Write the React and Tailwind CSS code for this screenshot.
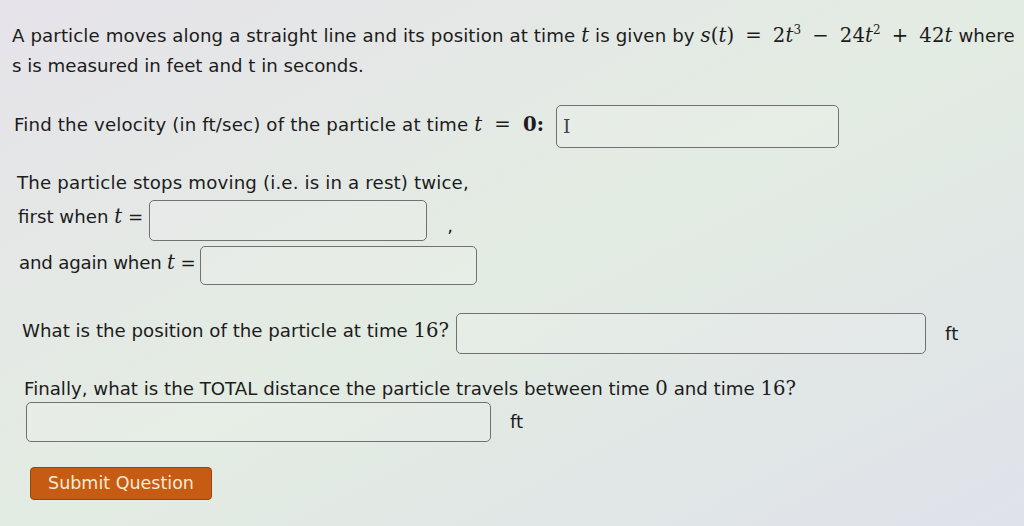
import React from "react";

// inline math pieces, rendered in a serif italic like the KaTeX output
const M = ({ children, className = "" }) => (
  <span className={`italic text-[1.08em] ${className}`} style={{ fontFamily: '"DejaVu Serif", "Liberation Serif", serif' }}>
    {children}
  </span>
);
const N = ({ children, className = "" }) => (
  <span className={`text-[1.08em] ${className}`} style={{ fontFamily: '"DejaVu Serif", "Liberation Serif", serif' }}>
    {children}
  </span>
);

const Box = ({ className = "", children }) => (
  <div className={`rounded-[5px] border-[1.5px] border-[#6f7172] bg-white/10 ${className}`}>{children}</div>
);

export default function App() {
  return (
    <div
      className="w-[1024px] h-[526px] overflow-hidden bg-linear-to-br from-[#e6e3ea] via-[#e3ece2] to-[#dfe2ea] text-[#1c1c1c] text-[18.2px]"
      style={{ fontFamily: '"DejaVu Sans", Verdana, sans-serif' }}
    >
      <div className="flex flex-col pt-[22px]">
        {/* intro */}
        <div className="pl-[12px] leading-[28px] whitespace-nowrap">
          <div className="tracking-[0.1px]">
            A particle moves along a straight line and its position at time <M>t</M> is given by{" "}
            <M>s</M>
            <N>(</N>
            <M>t</M>
            <N>)</N>
            <N className="mx-[11px]">=</N>
            <N>2</N>
            <M>t</M>
            <N className="relative -top-[8px] text-[12px]">3</N>
            <N className="mx-[11px]">−</N>
            <N>24</N>
            <M>t</M>
            <N className="relative -top-[8px] text-[12px]">2</N>
            <N className="mx-[11px]">+</N>
            <N>42</N>
            <M>t</M> where
          </div>
          <div>s is measured in feet and t in seconds.</div>
        </div>

        {/* velocity at t = 0 */}
        <div className="flex items-center pl-[14px] mt-[25px] whitespace-nowrap">
          <span className="-mt-[4px] tracking-[0.15px]">
            Find the velocity (in ft/sec) of the particle at time <M>t</M>
            <N className="mx-[12px]">=</N>
            <N className="font-bold">0:</N>
          </span>
          <Box className="ml-[12px] w-[283px] h-[43px] flex items-center pl-[6px]">
            <span className="text-[#444] text-[19px] leading-none" style={{ fontFamily: '"DejaVu Serif", serif' }}>I</span>
          </Box>
        </div>

        {/* rest points */}
        <div className="pl-[17px] mt-[23px] whitespace-nowrap leading-[24px] tracking-[0.15px]">
          The particle stops moving (i.e. is in a rest) twice,
        </div>
        <div className="flex items-start pl-[18px] mt-[5px] whitespace-nowrap">
          <span className="mt-[2px]">
            first when <M>t</M> =
          </span>
          <Box className="ml-[6px] w-[278px] h-[41px]" />
          <span className="ml-[20px] mt-[12px]">,</span>
        </div>
        <div className="flex items-start pl-[19px] mt-[5px] whitespace-nowrap">
          <span className="mt-[2px] tracking-[-0.2px]">
            and again when <M>t</M> =
          </span>
          <Box className="ml-[5px] w-[277px] h-[39px]" />
        </div>

        {/* position at 16 */}
        <div className="flex items-center pl-[22px] mt-[28px] whitespace-nowrap">
          <span className="-mt-[6px]">
            What is the position of the particle at time <N>16?</N>
          </span>
          <Box className="ml-[7px] w-[470px] h-[41px]" />
          <span className="ml-[19px]">ft</span>
        </div>

        {/* total distance */}
        <div className="pl-[24px] mt-[23px] whitespace-nowrap leading-[24px]">
          Finally, what is the TOTAL distance the particle travels between time <N>0</N> and time <N>16?</N>
        </div>
        <div className="flex items-start pl-[26px] mt-[1px]">
          <Box className="w-[465px] h-[40px]" />
          <span className="ml-[19px] mt-[6px]">ft</span>
        </div>

        <div className="pl-[30px] mt-[25px]">
          <button className="w-[182px] h-[33px] rounded-[4px] bg-[#c65b14] border border-[#9c4309] text-[#f7ead2] text-[17.5px] leading-none">
            Submit Question
          </button>
        </div>
      </div>
    </div>
  );
}
